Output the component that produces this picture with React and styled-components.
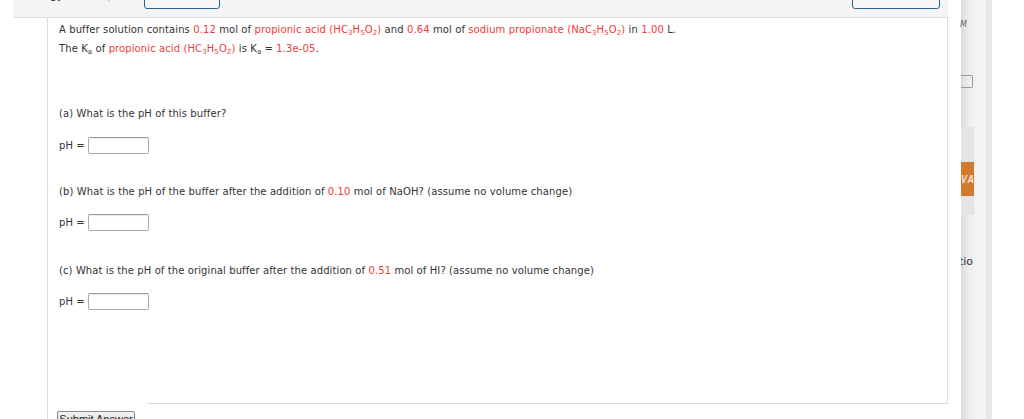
import React from 'react';
import styled, { createGlobalStyle } from 'styled-components';

const GlobalStyle = createGlobalStyle`
  html, body {
    margin: 0;
    padding: 0;
    background: #fff;
  }
  body {
    font-family: "DejaVu Sans", Verdana, sans-serif;
    color: #333;
  }
`;

const Page = styled.div`
  display: flex;
  width: 1024px;
  height: 419px;
  overflow: hidden;
`;

const Main = styled.div`
  width: 935px;
  margin-left: 13px;
  display: flex;
  flex-direction: column;
`;

const TopBar = styled.div`
  height: 17px;
  flex: none;
  background: #f4f4f4;
  border-bottom: 1px solid #dcdcdc;
  display: flex;
  align-items: flex-start;
  overflow: hidden;
`;

const CutText = styled.span`
  margin-left: 37px;
  margin-top: -11px;
  font-size: 11px;
  line-height: 14px;
  color: #333;
  width: 94px;
  white-space: nowrap;
  overflow: hidden;
`;

const TabButton = styled.div`
  width: ${p => p.w}px;
  height: 13px;
  margin-top: -4px;
  margin-left: ${p => p.ml || 0}px;
  margin-right: ${p => p.mr || 0}px;
  box-sizing: border-box;
  border: 1px solid #2f5f8f;
  border-radius: 0 0 3px 3px;
  background: #f7f7f7;
`;

const Spacer = styled.div`
  flex: 1;
`;

const Body = styled.div`
  margin-left: 34px;
  flex: 1;
  border-left: 1px solid #dcdcdc;
  display: flex;
  flex-direction: column;
`;

const Panel = styled.div`
  height: 385px;
  flex: none;
  box-sizing: border-box;
  border-right: 1px solid #dcdcdc;
  border-bottom-right-radius: 3px;
  padding: 2px 0 0 11px;
  font-size: 10px;
  letter-spacing: 0.1px;
`;

const Line = styled.div`
  line-height: 19px;
  white-space: nowrap;
  margin-top: ${p => p.mt || 0}px;
`;

const Red = styled.span`
  color: #ee3b3b;
`;

const Sub = styled.sub`
  font-size: 7px;
  line-height: 0;
  vertical-align: -2px;
`;

const AnswerRow = styled.div`
  display: flex;
  align-items: center;
  gap: 3px;
  margin-top: ${p => p.mt}px;
  height: 17px;
  line-height: 17px;
`;

const AnswerBox = styled.div`
  width: 61px;
  height: 17px;
  box-sizing: border-box;
  border: 1px solid #ababab;
  border-top-color: #9a9a9a;
  border-radius: 2px;
  background: #fff;
  box-shadow: inset 0 1px 1px rgba(0, 0, 0, 0.08);
`;

const Footer = styled.div`
  flex: 1;
  display: flex;
`;

const FooterLeft = styled.div`
  width: 99px;
  flex: none;
  padding: 8px 0 0 9px;
  box-sizing: border-box;
`;

const FooterRight = styled.div`
  flex: 1;
  border-top: 1px solid #dcdcdc;
`;

const SubmitButton = styled.div`
  width: 78px;
  height: 16px;
  box-sizing: border-box;
  border: 1px solid #8a8a8a;
  border-radius: 2px;
  background: linear-gradient(#f4f4f4, #dcdcdc);
  font-family: "Liberation Sans", Arial, sans-serif;
  font-size: 11px;
  line-height: 14px;
  text-align: center;
  color: #222;
  white-space: nowrap;
  overflow: hidden;
`;

const Sidebar = styled.div`
  width: 31px;
  margin-left: 13px;
  flex: none;
  position: relative;
  background: linear-gradient(to right, #dadada 0px, #eeeeee 8px, #f4f4f4 18px, #f2f2f2 25px, #e8e8e8 25px, #e8e8e8 31px);
  display: flex;
  flex-direction: column;
`;

const Mark = styled.div`
  position: absolute;
  left: -1px;
  top: 20px;
  font-size: 8px;
  font-style: italic;
  color: #666;
`;

const CheckBox = styled.div`
  width: 12px;
  height: 13px;
  margin-top: 75px;
  box-sizing: border-box;
  border: 1px solid #999;
  border-left: none;
  border-radius: 0 2px 2px 0;
`;

const Promo = styled.div`
  width: 13px;
  height: 88px;
  margin-top: 39px;
  background: #e4e4e4;
  display: flex;
  flex-direction: column;
`;

const PromoBand = styled.div`
  height: 34px;
  margin-top: 35px;
  background: #d17a2f;
  overflow: hidden;
  display: flex;
  align-items: center;
  justify-content: flex-start;
  color: #fbeee0;
  font-family: "Open Sans", sans-serif;
  font-style: italic;
  font-weight: 600;
  font-size: 10px;
  letter-spacing: 1px;
  white-space: nowrap;
`;

const SideText = styled.div`
  margin-top: 40px;
  width: 13px;
  overflow: hidden;
  font-family: "DejaVu Sans", sans-serif;
  font-size: 11px;
  line-height: 14px;
  color: #333;
  white-space: nowrap;
  text-indent: -2px;
`;

const HC = () => (
  <>
    HC<Sub>3</Sub>H<Sub>5</Sub>O<Sub>2</Sub>
  </>
);

export default function App() {
  return (
    <Page>
      <GlobalStyle />
      <Main>
        <TopBar>
          <CutText>gy Tutorial)</CutText>
          <TabButton w={76} ml={0} />
          <Spacer />
          <TabButton w={88} mr={8} />
        </TopBar>
        <Body>
          <Panel>
            <Line>
              A buffer solution contains <Red>0.12</Red> mol of{' '}
              <Red>propionic acid (<HC />)</Red> and <Red>0.64</Red> mol of{' '}
              <Red>sodium propionate (NaC<Sub>3</Sub>H<Sub>5</Sub>O<Sub>2</Sub>)</Red> in{' '}
              <Red>1.00</Red> L.
            </Line>
            <Line>
              The K<Sub>a</Sub> of <Red>propionic acid (<HC />)</Red> is K<Sub>a</Sub> ={' '}
              <Red>1.3e-05</Red>.
            </Line>
            <Line mt={46}>(a) What is the pH of this buffer?</Line>
            <AnswerRow mt={14}>
              pH = <AnswerBox />
            </AnswerRow>
            <Line mt={28}>
              (b) What is the pH of the buffer after the addition of <Red>0.10</Red> mol of NaOH?
              (assume no volume change)
            </Line>
            <AnswerRow mt={13}>
              pH = <AnswerBox />
            </AnswerRow>
            <Line mt={30}>
              (c) What is the pH of the original buffer after the addition of <Red>0.51</Red> mol
              of HI? (assume no volume change)
            </Line>
            <AnswerRow mt={13}>
              pH = <AnswerBox />
            </AnswerRow>
          </Panel>
          <Footer>
            <FooterLeft>
              <SubmitButton>Submit Answer</SubmitButton>
            </FooterLeft>
            <FooterRight />
          </Footer>
        </Body>
      </Main>
      <Sidebar>
        <Mark>M</Mark>
        <CheckBox />
        <Promo>
          <PromoBand>VA</PromoBand>
        </Promo>
        <SideText>tio</SideText>
      </Sidebar>
    </Page>
  );
}
